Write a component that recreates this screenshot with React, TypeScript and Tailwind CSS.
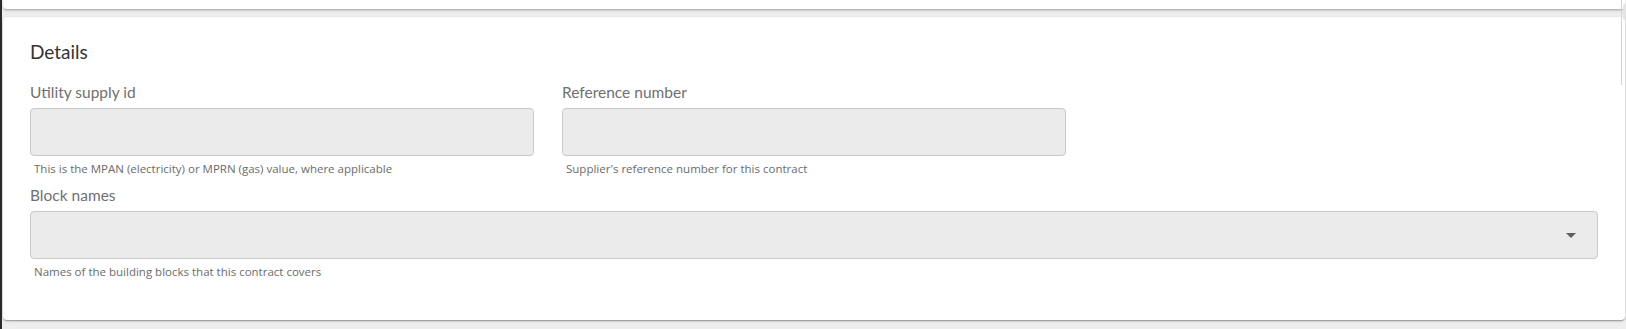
import React from "react";

const font = { fontFamily: "Lato, 'Open Sans', 'Noto Sans', sans-serif" };
const helperFont = { fontFamily: "'Open Sans', Lato, 'Noto Sans', sans-serif" };

function Field({ label, helper, select }: { label: string; helper: string; select?: boolean }) {
  return (
    <div className="flex flex-col">
      <label className="text-[15.5px] leading-[20px] text-[#707070]">{label}</label>
      <div className="relative mt-[6px] h-[48px] rounded-[4px] border border-[#c9c9c9] bg-[#ebebeb]">
        {select && (
          <svg
            className="absolute right-[14px] top-[11px] h-[24px] w-[24px] text-[#5f5f5f]"
            viewBox="0 0 24 24"
            fill="currentColor"
          >
            <path d="M7 10l5 5 5-5z" />
          </svg>
        )}
      </div>
      <p className="mt-[5px] pl-[4px] text-[11.5px] leading-[16px] text-[#6b6b6b]" style={helperFont}>
        {helper}
      </p>
    </div>
  );
}

export default function App() {
  return (
    <div className="relative flex h-[329px] w-full overflow-hidden bg-[#eeeeee]" style={font}>
      <div className="w-[2px] shrink-0 bg-[#2b2b2b]" />
      <div className="flex min-w-0 flex-1 flex-col pl-[1px] pr-[1px]">
        <div className="h-[10px] shrink-0 rounded-b-[4px] border-b border-[#b8b8b8] bg-white shadow-[0_1px_2px_rgba(0,0,0,0.15)]" />
        <div className="mt-[7px] rounded-[4px] bg-white px-[27px] pb-[40px] pt-[23px] shadow-[0_1px_3px_rgba(0,0,0,0.2),0_1px_1px_rgba(0,0,0,0.14),0_2px_1px_-1px_rgba(0,0,0,0.12)]">
          <h2 className="mb-[18px] text-[19px] leading-[24px] text-[#333333]">Details</h2>
          <div className="grid grid-cols-3 gap-x-[28px] gap-y-[8px]">
            <Field
              label="Utility supply id"
              helper="This is the MPAN (electricity) or MPRN (gas) value, where applicable"
            />
            <Field label="Reference number" helper="Supplier's reference number for this contract" />
            <div />
            <div className="col-span-3">
              <Field
                label="Block names"
                helper="Names of the building blocks that this contract covers"
                select
              />
            </div>
          </div>
        </div>
      </div>
      <div className="absolute left-[1621px] top-0 h-[85px] w-[1px] bg-[#d9d0d0]" />
      <div className="absolute left-[1623px] top-[4px] h-[16px] w-[3px] rounded-l-[2px] bg-[#e4e4e4]" />
    </div>
  );
}
